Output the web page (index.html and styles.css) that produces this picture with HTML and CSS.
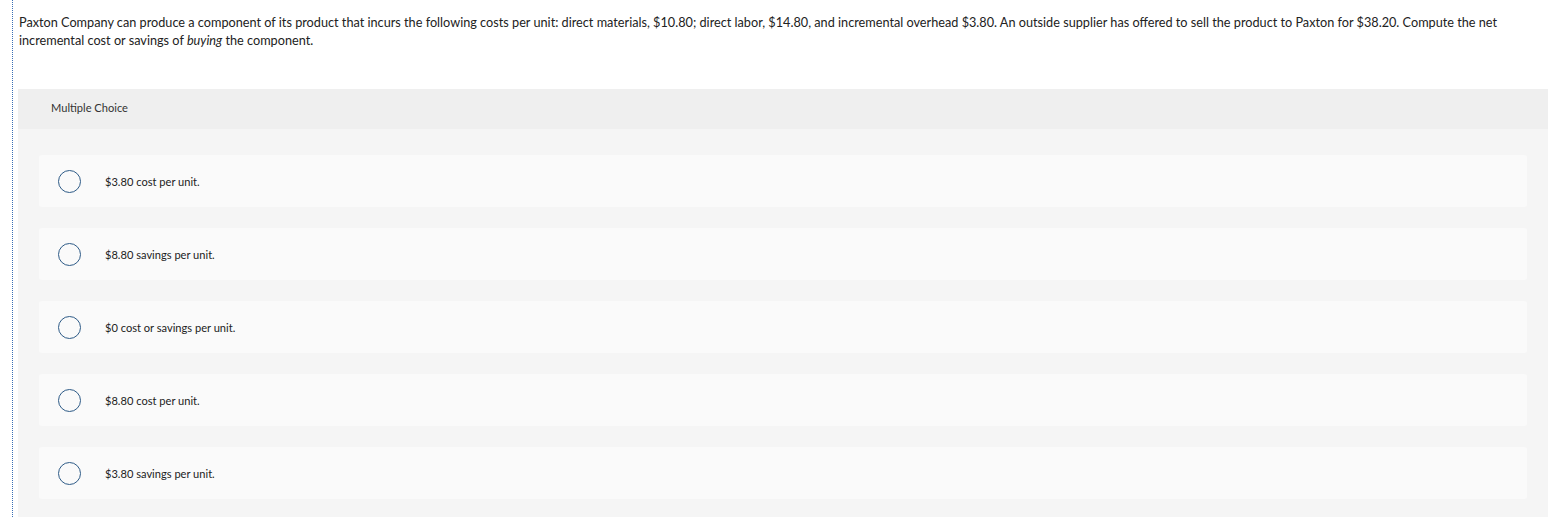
FILE: index.html
```html
<!DOCTYPE html>
<html>
<head>
<meta charset="utf-8">
<link rel="stylesheet" href="styles.css">
</head>
<body>
<div class="frame">
  <p class="question">Paxton Company can produce a component of its product that incurs the following costs per unit: direct materials, $10.80; direct labor, $14.80, and incremental overhead $3.80. An outside supplier has offered to sell the product to Paxton for $38.20. Compute the net incremental cost or savings of <em>buying</em> the component.</p>
  <div class="panel">
    <div class="panel-head">Multiple Choice</div>
    <div class="options">
      <div class="option"><span class="radio"></span><span class="label">$3.80 cost per unit.</span></div>
      <div class="option"><span class="radio"></span><span class="label">$8.80 savings per unit.</span></div>
      <div class="option"><span class="radio"></span><span class="label">$0 cost or savings per unit.</span></div>
      <div class="option"><span class="radio"></span><span class="label">$8.80 cost per unit.</span></div>
      <div class="option"><span class="radio"></span><span class="label">$3.80 savings per unit.</span></div>
    </div>
  </div>
</div>
</body>
</html>
```
FILE: styles.css
```css
html, body {
  margin: 0;
  padding: 0;
  background: #fff;
}
body {
  font-family: Lato, "Open Sans", sans-serif;
  color: #222;
  overflow: hidden;
  height: 517px;
}
.frame {
  margin-left: 12px;
  border-left: 1px dotted #3a6fb5;
  padding-left: 5px;
  padding-right: 15px;
  min-height: 517px;
  box-sizing: border-box;
  padding-top: 13px;
}
.question {
  margin: 0;
  font-size: 12.7px;
  line-height: 18px;
  color: #222;
  padding-left: 1px;
  padding-right: 20px;
}
.question em {
  font-style: italic;
}
.panel {
  margin-top: 40px;
  background: #f5f5f5;
  padding-bottom: 30px;
}
.panel-head {
  background: #efefef;
  height: 40px;
  line-height: 38px;
  padding-left: 33px;
  font-size: 11.1px;
  color: #333;
}
.options {
  padding: 26px 21px 0 21px;
  display: flex;
  flex-direction: column;
  gap: 21px;
}
.option {
  background: #fafafa;
  border-radius: 3px;
  height: 52px;
  display: flex;
  align-items: center;
  padding-left: 19px;
}
.radio {
  width: 21px;
  height: 21px;
  border: 1.5px solid #2e5b87;
  border-radius: 50%;
  flex: none;
  box-sizing: content-box;
}
.label {
  margin-left: 24px;
  font-size: 11.1px;
  color: #222;
}
```
